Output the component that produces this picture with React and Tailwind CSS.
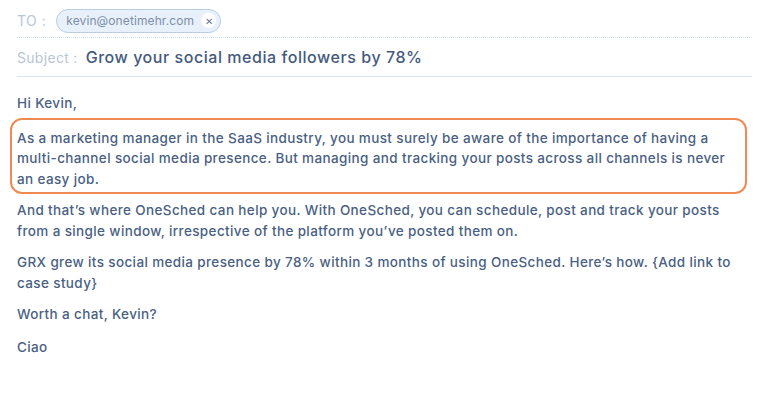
import React from "react";

const EmailPreview = () => {
  return (
    <div
      className="w-[770px] h-[410px] bg-white overflow-hidden text-[#4a5f82]"
      style={{ fontFamily: "Inter, 'Open Sans', sans-serif" }}
    >
      <div className="pl-[17px] pr-[18px]">
        <div className="flex items-center h-[38px] pt-[4px] border-b border-dotted border-[#cfe0ee]">
          <span className="text-[14px] text-[#b9c6d6] mr-[10px] tracking-[0.5px]">TO :</span>
          <span className="flex items-center h-[24px] pl-[9px] pr-[4px] rounded-full bg-[#e8f1fb] border border-[#b9cde3] text-[12px] tracking-[0.1px] text-[#7d8ea6]">
            kevin@onetimehr.com
            <span className="ml-[7px] flex items-center justify-center w-[15px] h-[15px] rounded-full bg-white text-[10px] text-[#6b7c93] leading-none">
              ✕
            </span>
          </span>
        </div>
        <div className="flex items-center h-[39px] border-b border-[#d6e6f2]">
          <span className="text-[14px] text-[#b9c6d6] mr-[8px] tracking-[0.3px]">Subject :</span>
          <span className="text-[16px] font-medium tracking-[0.55px] text-[#44597c]">
            Grow your social media followers by 78%
          </span>
        </div>
      </div>

      <div className="pt-[16px] text-[13.5px] font-medium leading-[20.5px] tracking-[0.37px]">
        <p className="pl-[17px]">Hi Kevin,</p>
        <div className="mt-[4px] ml-[10px] w-[737px] border-2 border-[#f08a52] rounded-[12px] pl-[5px] pr-[4px] pt-[8px] pb-[3px]">
          <p className="whitespace-nowrap">
            As a marketing manager in the SaaS industry, you must surely be aware of the importance of having a
            <br />
            multi-channel social media presence. But managing and tracking your posts across all channels is never
            <br />
            an easy job.
          </p>
        </div>
        <div className="pl-[17px] pr-[10px] whitespace-nowrap">
          <p className="mt-[6px]">
            And that’s where OneSched can help you. With OneSched, you can schedule, post and track your posts
            <br />
            from a single window, irrespective of the platform you’ve posted them on.
          </p>
          <p className="mt-[11px]">
            GRX grew its social media presence by 78% within 3 months of using OneSched. Here’s how. {"{"}Add link to
            <br />
            case study{"}"}
          </p>
          <p className="mt-[11px]">Worth a chat, Kevin?</p>
          <p className="mt-[12px]">Ciao</p>
        </div>
      </div>
    </div>
  );
};

export default function App() {
  return <EmailPreview />;
}
